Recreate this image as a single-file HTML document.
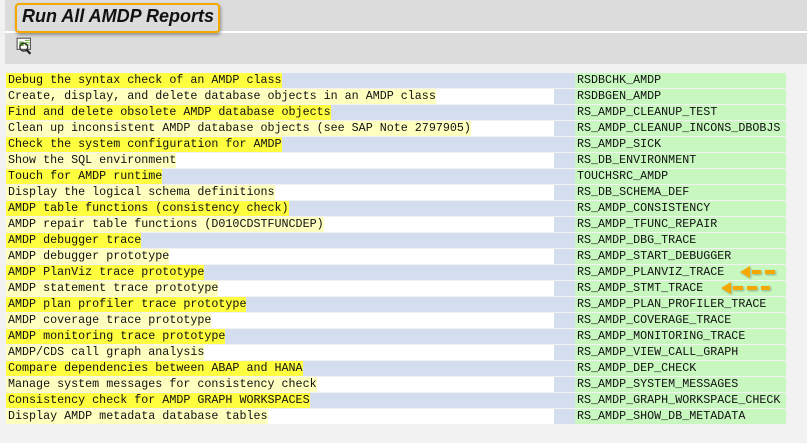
<!DOCTYPE html>
<html><head><style>
body{margin:0;width:807px;height:443px;background:#f2f2f2;position:relative;overflow:hidden;font-family:"Liberation Mono","Courier New",monospace;}
.hdr{position:absolute;left:5px;top:0;width:802px;height:31px;background:#dcdcdc;}
.wl{position:absolute;left:5px;top:31px;width:802px;height:2px;background:#fff;}
.tb{position:absolute;left:5px;top:33px;width:802px;height:31px;background:#dcdcdc;}
.title{position:absolute;left:15px;top:3px;width:205px;height:30px;border:2px solid #f5a800;border-radius:4px;box-shadow:1px 2px 3px rgba(0,0,0,.35);box-sizing:border-box;background:#dcdcdc;}
.title span{position:absolute;left:5px;top:1px;font:italic bold 18px "Liberation Sans",sans-serif;color:#111;white-space:nowrap;}
.rows{position:absolute;left:6px;top:73px;}
.r{position:relative;height:15px;margin-bottom:1px;width:780px;font-size:11.7px;line-height:15px;color:#111;}
.r .t{position:absolute;left:0;top:0;height:15px;padding-left:2px;white-space:pre;}
.r .g{position:absolute;left:569px;top:0;width:211px;height:15px;background:#c8f8c0;padding-left:2px;box-sizing:border-box;white-space:pre;}
.o{background:#d4deef;}
.o .t{background:#ffff40;}
.e{background:linear-gradient(to right,#fff 548px,#d4deef 548px);}
.e .t{background:#ffffc0;}
</style></head><body>
<div class="hdr"></div><div class="wl"></div><div class="tb"></div>
<div class="title"><span>Run All AMDP Reports</span></div>
<svg style="position:absolute;left:16px;top:37px" width="20" height="18" viewBox="0 0 18 16">
<rect x="1" y="1" width="12" height="10" fill="#fff" stroke="#555"/>
<rect x="3" y="4" width="4" height="4" fill="#6cb33e"/>
<line x1="8" y1="3" x2="12" y2="3" stroke="#6cb33e"/><line x1="8" y1="5" x2="12" y2="5" stroke="#6cb33e"/><line x1="8" y1="7" x2="12" y2="7" stroke="#6cb33e"/>
<circle cx="7" cy="9" r="3.5" fill="none" stroke="#333" stroke-width="1.3"/>
<line x1="9.5" y1="11.5" x2="13" y2="15" stroke="#222" stroke-width="2"/>
</svg>
<div class="rows">
<div class="r o"><span class="t">Debug the syntax check of an AMDP class</span><span class="g">RSDBCHK_AMDP</span></div>
<div class="r e"><span class="t">Create, display, and delete database objects in an AMDP class</span><span class="g">RSDBGEN_AMDP</span></div>
<div class="r o"><span class="t">Find and delete obsolete AMDP database objects</span><span class="g">RS_AMDP_CLEANUP_TEST</span></div>
<div class="r e"><span class="t">Clean up inconsistent AMDP database objects (see SAP Note 2797905)</span><span class="g">RS_AMDP_CLEANUP_INCONS_DBOBJS</span></div>
<div class="r o"><span class="t">Check the system configuration for AMDP</span><span class="g">RS_AMDP_SICK</span></div>
<div class="r e"><span class="t">Show the SQL environment</span><span class="g">RS_DB_ENVIRONMENT</span></div>
<div class="r o"><span class="t">Touch for AMDP runtime</span><span class="g">TOUCHSRC_AMDP</span></div>
<div class="r e"><span class="t">Display the logical schema definitions</span><span class="g">RS_DB_SCHEMA_DEF</span></div>
<div class="r o"><span class="t">AMDP table functions (consistency check)</span><span class="g">RS_AMDP_CONSISTENCY</span></div>
<div class="r e"><span class="t">AMDP repair table functions (D010CDSTFUNCDEP)</span><span class="g">RS_AMDP_TFUNC_REPAIR</span></div>
<div class="r o"><span class="t">AMDP debugger trace</span><span class="g">RS_AMDP_DBG_TRACE</span></div>
<div class="r e"><span class="t">AMDP debugger prototype</span><span class="g">RS_AMDP_START_DEBUGGER</span></div>
<div class="r o"><span class="t">AMDP PlanViz trace prototype</span><span class="g">RS_AMDP_PLANVIZ_TRACE</span></div>
<div class="r e"><span class="t">AMDP statement trace prototype</span><span class="g">RS_AMDP_STMT_TRACE</span></div>
<div class="r o"><span class="t">AMDP plan profiler trace prototype</span><span class="g">RS_AMDP_PLAN_PROFILER_TRACE</span></div>
<div class="r e"><span class="t">AMDP coverage trace prototype</span><span class="g">RS_AMDP_COVERAGE_TRACE</span></div>
<div class="r o"><span class="t">AMDP monitoring trace prototype</span><span class="g">RS_AMDP_MONITORING_TRACE</span></div>
<div class="r e"><span class="t">AMDP/CDS call graph analysis</span><span class="g">RS_AMDP_VIEW_CALL_GRAPH</span></div>
<div class="r o"><span class="t">Compare dependencies between ABAP and HANA</span><span class="g">RS_AMDP_DEP_CHECK</span></div>
<div class="r e"><span class="t">Manage system messages for consistency check</span><span class="g">RS_AMDP_SYSTEM_MESSAGES</span></div>
<div class="r o"><span class="t">Consistency check for AMDP GRAPH WORKSPACES</span><span class="g">RS_AMDP_GRAPH_WORKSPACE_CHECK</span></div>
<div class="r e"><span class="t">Display AMDP metadata database tables</span><span class="g">RS_AMDP_SHOW_DB_METADATA</span></div>
</div>
<svg style="position:absolute;left:718px;top:262px;filter:drop-shadow(1px 1px 1px rgba(0,0,0,.3))" width="70" height="36" viewBox="0 0 70 36">
<g fill="#f5a800">
<polygon points="22,10 32,4 32,16"/><rect x="34" y="8" width="9" height="4"/><rect x="47" y="8" width="10" height="4"/>
<polygon points="3,26 13,20 13,32"/><rect x="15" y="24" width="10" height="4"/><rect x="29" y="24" width="10" height="4"/><rect x="43" y="24" width="9" height="4"/>
</g></svg>
</body></html>
